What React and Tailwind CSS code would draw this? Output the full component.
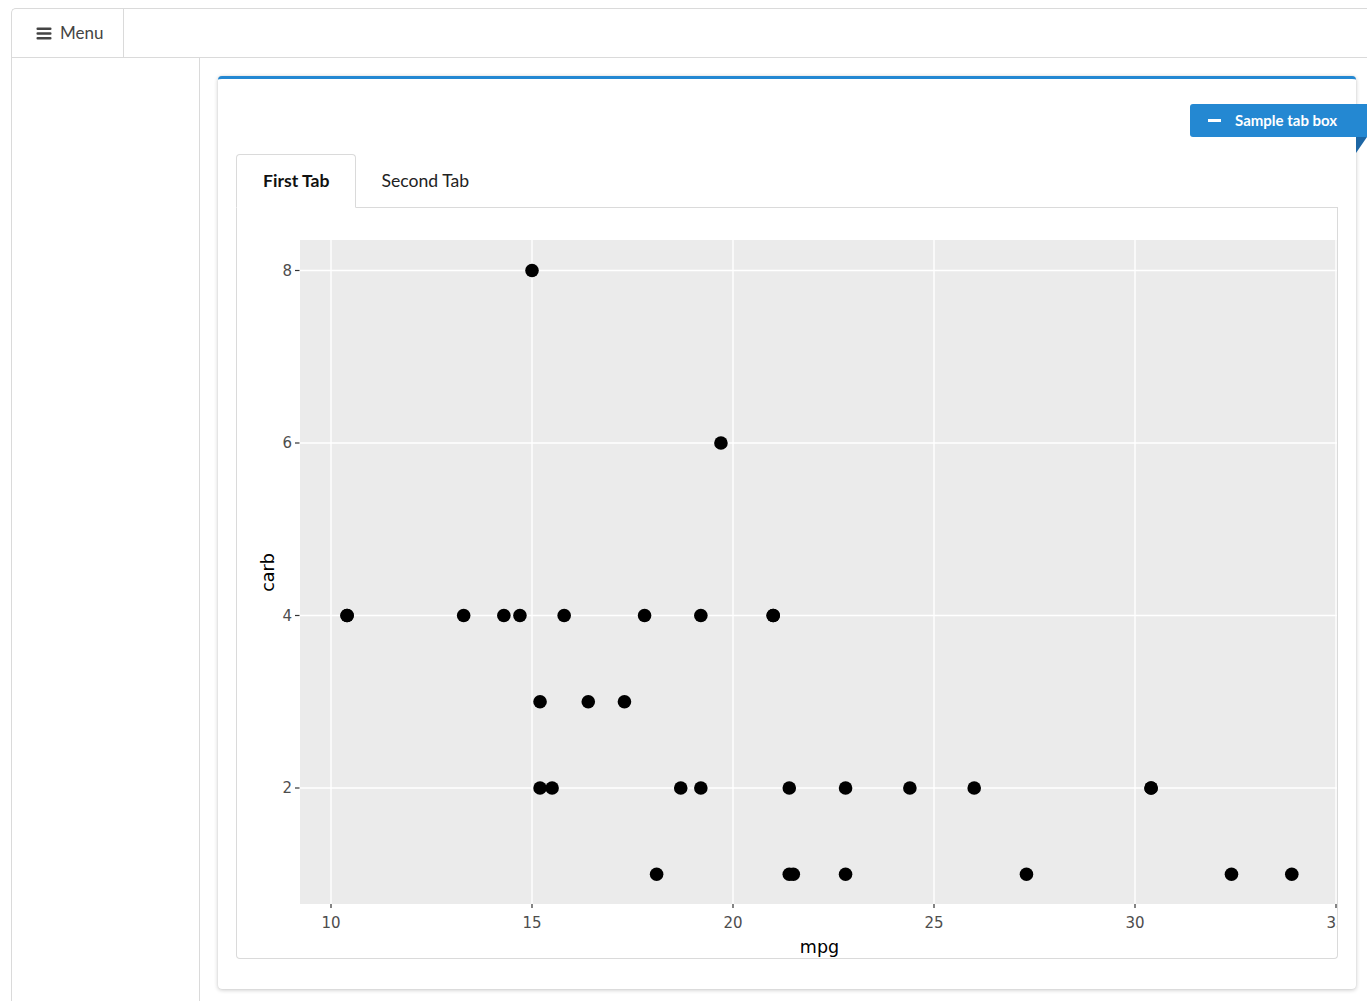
import React from "react";

const data = [
  [21.0, 4], [21.0, 4], [22.8, 1], [21.4, 1], [18.7, 2], [18.1, 1], [14.3, 4], [24.4, 2],
  [22.8, 2], [19.2, 4], [17.8, 4], [16.4, 3], [17.3, 3], [15.2, 3], [10.4, 4], [10.4, 4],
  [14.7, 4], [32.4, 1], [30.4, 2], [33.9, 1], [21.5, 1], [15.5, 2], [15.2, 2], [13.3, 4],
  [19.2, 2], [27.3, 1], [26.0, 2], [30.4, 2], [15.8, 4], [19.7, 6], [15.0, 8], [21.4, 2],
];

const X = (v) => 94 + (v - 10) * 40.2;
const Y = (v) => 62.5 + (8 - v) * 86.25;

function Plot() {
  const xs = [10, 15, 20, 25, 30, 35];
  const ys = [2, 4, 6, 8];
  return (
    <svg width="1100" height="750" viewBox="0 0 1100 750" className="block" style={{ fontFamily: "'DejaVu Sans', sans-serif" }}>
      <rect x="63" y="32" width="1040" height="664" fill="#ebebeb" />
      {xs.map((v) => (
        <line key={"gx" + v} x1={X(v)} x2={X(v)} y1="32" y2="696" stroke="#ffffff" strokeWidth="1.4" />
      ))}
      {ys.map((v) => (
        <line key={"gy" + v} x1="63" x2="1103" y1={Y(v)} y2={Y(v)} stroke="#ffffff" strokeWidth="1.4" />
      ))}
      {data.map(([m, c], i) => (
        <circle key={i} cx={X(m)} cy={Y(c)} r="6.8" fill="#000000" />
      ))}
      {xs.map((v) => (
        <g key={"tx" + v}>
          <line x1={X(v)} x2={X(v)} y1="696" y2="700" stroke="#333333" strokeWidth="1.2" />
          <text x={X(v)} y="720" textAnchor="middle" fontSize="15" fill="#4d4d4d">{v}</text>
        </g>
      ))}
      {ys.map((v) => (
        <g key={"ty" + v}>
          <line x1="58" x2="62.5" y1={Y(v)} y2={Y(v)} stroke="#333333" strokeWidth="1.2" />
          <text x="55" y={Y(v) + 5.4} textAnchor="end" fontSize="15" fill="#4d4d4d">{v}</text>
        </g>
      ))}
      <text x="582.5" y="745" textAnchor="middle" fontSize="17.5" fill="#000000">mpg</text>
      <text transform="translate(37 364.5) rotate(-90)" textAnchor="middle" fontSize="17.5" fill="#000000">carb</text>
    </svg>
  );
}

export default function App() {
  return (
    <div className="min-h-screen bg-white pt-2 pl-[11px] overflow-hidden" style={{ fontFamily: "Lato, 'Open Sans', sans-serif" }}>
      <div className="flex h-[993px] flex-col rounded-tl-[5px] border-l border-t border-[#dadada]">
        <div className="flex h-[49px] shrink-0 border-b border-[#dadada]">
          <div className="flex w-[112px] items-center gap-[8px] border-r border-[#dadada] pl-[24px] text-[17px] text-[#444]">
            <svg width="16" height="13" viewBox="0 0 16 13" className="mt-[1px]">
              <rect x="0.5" y="0.5" width="15" height="2.6" rx="1.1" fill="#444" />
              <rect x="0.5" y="5.2" width="15" height="2.6" rx="1.1" fill="#444" />
              <rect x="0.5" y="9.9" width="15" height="2.6" rx="1.1" fill="#444" />
            </svg>
            <span>Menu</span>
          </div>
          <div className="flex-1" />
        </div>
        <div className="flex flex-1">
          <div className="w-[188px] shrink-0 border-r border-[#dadada]" />
          <div className="flex-1 pl-[18px] pr-[11px] pt-[18px]">
            <div className="relative rounded-[4px] border-t-[3px] border-[#2488d2] bg-white px-[18px] pb-[30px] pt-[75px] shadow-[0_0_1px_rgba(0,0,0,0.13),0_1px_4px_rgba(0,0,0,0.22)]">
              <div className="absolute right-[-11px] top-[25px] flex h-[33px] w-[177px] items-center rounded-l-[3px] bg-[#2488d2] pl-[18px] text-[15px] font-bold text-white">
                <span className="mr-[14px] inline-block h-[3px] w-[13px] bg-white" />
                <span>Sample tab box</span>
                <span className="absolute right-0 top-[33px] h-0 w-0 border-r-[11px] border-t-[16px] border-r-transparent border-t-[#1d66a4]" />
              </div>
              <div className="flex border-b border-[#dadada]">
                <div className="-mb-px flex h-[54px] items-center rounded-t-[4px] border border-[#dadada] border-b-white bg-white pl-[26px] pr-[25px] text-[17.6px] font-bold text-[#111]">
                  First Tab
                </div>
                <div className="-mb-px flex h-[54px] items-center border border-transparent px-[25px] text-[17.6px] text-[#222]">
                  Second Tab
                </div>
              </div>
              <div className="h-[751px] overflow-hidden rounded-b-[4px] border-x border-b border-[#dadada]">
                <Plot />
              </div>
            </div>
          </div>
        </div>
      </div>
    </div>
  );
}
